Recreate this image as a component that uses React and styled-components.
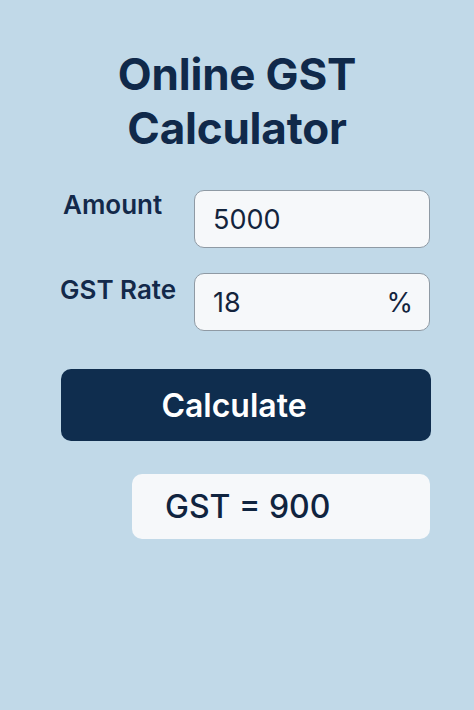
import styled, { createGlobalStyle } from 'styled-components';

const GlobalStyle = createGlobalStyle`
  html, body {
    margin: 0;
    padding: 0;
    background: #c1d9e8;
  }
  body {
    font-family: Inter, "Noto Sans", "Liberation Sans", sans-serif;
    color: #10294a;
  }
`

const Page = styled.div`
  width: 474px;
  height: 710px;
  box-sizing: border-box;
  padding: 47px 43px 0 60px;
  display: flex;
  flex-direction: column;
`

const Title = styled.h1`
  margin: 0 0 35px 0;
  padding-right: 17px;
  text-align: center;
  font-size: 44px;
  line-height: 54px;
  font-weight: 700;
  color: #10294a;
  letter-spacing: -0.2px;
`

const Row = styled.div`
  display: flex;
  align-items: flex-start;
  margin-bottom: ${(p) => p.$gap}px;
`

const Label = styled.label`
  width: 134px;
  flex-shrink: 0;
  padding-left: ${(p) => p.$indent || 0}px;
  box-sizing: border-box;
  margin-top: ${(p) => p.$top || 0}px;
  font-size: 26px;
  line-height: 22px;
  font-weight: 600;
  color: #13294a;
`

const Field = styled.div`
  width: 236px;
  height: 58px;
  box-sizing: border-box;
  display: flex;
  align-items: center;
  padding: 0 16px 0 18px;
  background: #f6f8fa;
  border: 1.5px solid #8f9aa4;
  border-radius: 10px;
`

const Input = styled.input`
  flex: 1;
  min-width: 0;
  border: none;
  outline: none;
  background: transparent;
  padding: 0;
  font-family: inherit;
  font-size: 27px;
  font-weight: 400;
  color: #13243d;
`

const Suffix = styled.span`
  font-size: 27px;
  color: #13243d;
`

const Button = styled.button`
  width: 370px;
  height: 72px;
  margin: 4px 0 33px 1px;
  padding: 0 24px 0 0;
  border: none;
  border-radius: 10px;
  background: #0f2d4e;
  color: #ffffff;
  font-family: inherit;
  font-size: 32px;
  font-weight: 600;
  cursor: pointer;
`

const Result = styled.div`
  width: 298px;
  height: 65px;
  margin-left: 72px;
  box-sizing: border-box;
  display: flex;
  align-items: center;
  padding-left: 33px;
  background: #f6f8fa;
  border-radius: 10px;
  font-size: 32px;
  font-weight: 500;
  color: #10243f;
`

export default function App() {
  const amount = 5000;
  const rate = 18;
  const gst = (amount * rate) / 100;

  return (
    <Page>
      <GlobalStyle />
      <Title>
        Online GST
        <br />
        Calculator
      </Title>
      <Row $gap={25}>
        <Label htmlFor="amount" $indent={3} $top={4}>Amount</Label>
        <Field>
          <Input id="amount" defaultValue={amount} readOnly />
        </Field>
      </Row>
      <Row $gap={34}>
        <Label htmlFor="rate" $top={6}>GST Rate</Label>
        <Field>
          <Input id="rate" defaultValue={rate} readOnly />
          <Suffix>%</Suffix>
        </Field>
      </Row>
      <Button type="button">Calculate</Button>
      <Result>GST = {gst}</Result>
    </Page>
  );
}
